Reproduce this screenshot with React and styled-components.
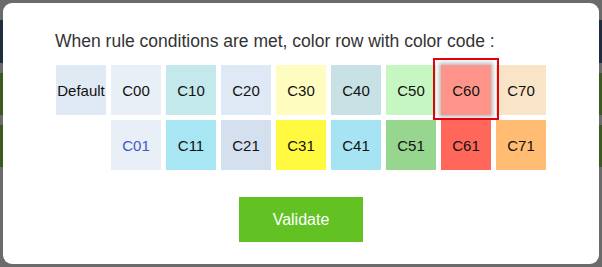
import React, { useState } from "react";
import styled, { createGlobalStyle } from "styled-components";

const GlobalStyle = createGlobalStyle`
  html, body {
    margin: 0;
    padding: 0;
  }
  body {
    font-family: "Liberation Sans", Arial, sans-serif;
  }
`;

const rows = [
  [
    { code: "Default", color: "#dfeaf4" },
    { code: "C00", color: "#e8eff7" },
    { code: "C10", color: "#c4e9ec" },
    { code: "C20", color: "#dfe9f5" },
    { code: "C30", color: "#fffcc0" },
    { code: "C40", color: "#c8e1e4" },
    { code: "C50", color: "#c6f7c3" },
    { code: "C60", color: "#ff958a" },
    { code: "C70", color: "#f9e4c8" },
  ],
  [
    null,
    { code: "C01", color: "#e8eff7", blue: true },
    { code: "C11", color: "#a8e6f3" },
    { code: "C21", color: "#d5e0ef" },
    { code: "C31", color: "#fff93f" },
    { code: "C41", color: "#a6e4f3" },
    { code: "C51", color: "#96d68e" },
    { code: "C61", color: "#ff675a" },
    { code: "C71", color: "#ffbc72" },
  ],
];

const ColorCodeDialog = () => {
  const [selected, setSelected] = useState("C60");

  return (
    <Backdrop>
      <Dialog>
        <Title>When rule conditions are met, color row with color code :</Title>
        <Grid>
          {rows.flat().map((cell, i) =>
            cell ? (
              <Swatch
                key={cell.code}
                $bg={cell.color}
                $blue={cell.blue}
                $active={selected === cell.code}
                onClick={() => setSelected(cell.code)}
              >
                {cell.code}
              </Swatch>
            ) : (
              <span key={"empty-" + i} />
            )
          )}
        </Grid>
        <Footer>
          <ValidateButton>Validate</ValidateButton>
        </Footer>
      </Dialog>
    </Backdrop>
  );
};

const Backdrop = styled.div`
  width: 602px;
  height: 267px;
  padding: 3px;
  box-sizing: border-box;
  background: linear-gradient(
    to bottom,
    #6b6b6b 0 20px,
    #1e2d40 20px 63px,
    #6b6b6b 63px 73px,
    #3a5a1e 73px 115px,
    #6b6b6b 115px 125px,
    #3a5a1e 125px 167px,
    #6b6b6b 167px
  );
`;

const Dialog = styled.div`
  height: 100%;
  background: #fff;
  border-radius: 9px;
  padding: 28px 0 0 52px;
  box-sizing: border-box;
`;

const Title = styled.p`
  margin: 0;
  font-size: 17.5px;
  line-height: 20px;
  color: #333;
`;

const Grid = styled.div`
  display: grid;
  grid-template-columns: repeat(9, 50px);
  grid-auto-rows: 50px;
  gap: 5px;
  margin-top: 14px;
  margin-left: 1px;
`;

const Swatch = styled.div`
  display: flex;
  align-items: center;
  justify-content: center;
  background: ${(p) => p.$bg};
  color: ${(p) => (p.$blue ? "#4157c9" : "#111")};
  font-size: 15px;
  cursor: pointer;
  ${(p) =>
    p.$active &&
    `
    position: relative;
    z-index: 1;
    box-shadow: 0 0 4px 2px rgba(0, 0, 0, 0.28);
    &::after {
      content: "";
      position: absolute;
      top: -7px;
      bottom: -5px;
      left: -8px;
      right: -8px;
      border: 2px solid #e3000f;
      pointer-events: none;
    }
  `}
`;

const Footer = styled.div`
  display: flex;
  justify-content: center;
  margin-top: 27px;
  padding-right: 52px;
`;

const ValidateButton = styled.button`
  width: 124px;
  height: 45px;
  border: none;
  background: #62c224;
  color: #fff;
  font-family: inherit;
  font-size: 16px;
  cursor: pointer;
`;

const App = () => (
  <>
    <GlobalStyle />
    <ColorCodeDialog />
  </>
);

export default App;
